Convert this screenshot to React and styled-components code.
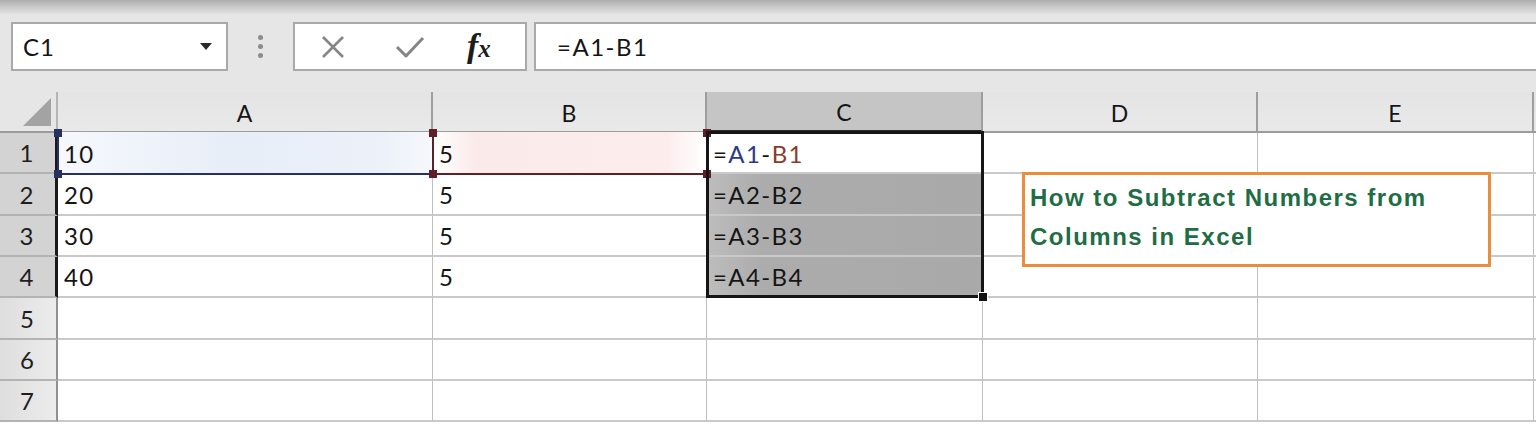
import styled, { createGlobalStyle } from 'styled-components'

const GlobalStyle = createGlobalStyle`
	* { box-sizing: border-box; }
	body {
		margin: 0;
		background: #ffffff;
		font-family: 'Lato', 'Liberation Sans', sans-serif;
	}
`

const columns = ['A', 'B', 'C', 'D', 'E']

const data = [
	['10', '5', null],
	['20', '5', '=A2-B2'],
	['30', '5', '=A3-B3'],
	['40', '5', '=A4-B4'],
	['', '', ''],
	['', '', ''],
	['', '', ''],
]

function App() {
	return (
		<Page>
			<GlobalStyle />
			<TopStrip />
			<FormulaBar>
				<NameBox>
					<NameText>C1</NameText>
					<Caret />
				</NameBox>
				<Grip>
					<Dot />
					<Dot />
					<Dot />
				</Grip>
				<ButtonBox>
					<IconButton>
						<svg width='26' height='26' viewBox='0 0 26 26'>
							<path d='M3 3 L23 23 M23 3 L3 23' stroke='#858585' strokeWidth='2.6' fill='none' />
						</svg>
					</IconButton>
					<IconButton>
						<svg width='30' height='24' viewBox='0 0 30 24'>
							<path d='M2 12 L11 21 L28 3' stroke='#858585' strokeWidth='3' fill='none' strokeLinejoin='round' />
						</svg>
					</IconButton>
					<FxLabel>
						f<span>x</span>
					</FxLabel>
				</ButtonBox>
				<FormulaInput>=A1-B1</FormulaInput>
			</FormulaBar>

			<Sheet>
				<Corner $r={1} $c={1}>
					<svg width='28' height='28' viewBox='0 0 28 28'>
						<path d='M28 0 L28 28 L0 28 Z' fill='#a3a3a3' />
					</svg>
				</Corner>
				{columns.map((col, i) => (
					<ColHeader key={col} $r={1} $c={i + 2} $selected={col === 'C'}>
						{col}
					</ColHeader>
				))}
				<ColHeader $r={1} $c={7} />

				{data.map((row, r) => (
					<Row key={r} index={r} row={row} />
				))}

				<RefBox $r={2} $c={2} $color='#27305e' $fill='linear-gradient(90deg, #f6f8fc 0%, #e8eef8 45%, #ebf0f9 85%, #f6f8fc 100%)'>
					<Handle $x='left' $y='top' $color='#27305e' />
					<Handle $x='left' $y='bottom' $color='#27305e' />
				</RefBox>
				<RefBox $r={2} $c={3} $color='#5e1f26' $fill='linear-gradient(90deg, #ffffff 0%, #fbeaea 15%, #fcecec 85%, #ffffff 100%)'>
					<Handle $x='left' $y='top' $color='#5e1f26' />
					<Handle $x='left' $y='bottom' $color='#5e1f26' />
					<Handle $x='right' $y='top' $color='#5e1f26' />
					<Handle $x='right' $y='bottom' $color='#5e1f26' />
				</RefBox>

				<CellText $r={2} $c={2}>10</CellText>
				<CellText $r={2} $c={3}>5</CellText>
				<CellText $r={2} $c={4}>
					=<RefA>A1</RefA>-<RefB>B1</RefB>
				</CellText>

				<Selection>
					<FillHandle />
				</Selection>

				<Note>
					How to Subtract Numbers from
					<br />
					Columns in Excel
				</Note>
			</Sheet>
		</Page>
	)
}

function Row({ index, row }) {
	const r = index + 2
	const inSelection = index < 4
	return (
		<>
			<RowHeader $r={r} $c={1} $selected={inSelection}>
				{index + 1}
			</RowHeader>
			{[0, 1, 2, 3, 4, 5].map((c) => {
				const shaded = c === 2 && index > 0 && index < 4
				const value = index === 0 ? '' : row[c] || ''
				return (
					<Cell key={c} $r={r} $c={c + 2} $shaded={shaded}>
						{value}
					</Cell>
				)
			})}
		</>
	)
}

export default App

const Page = styled.div`
	width: 1536px;
	height: 440px;
	overflow: hidden;
	background: #ffffff;
	display: flex;
	flex-direction: column;
`
const TopStrip = styled.div`
	height: 14px;
	flex: none;
	background: linear-gradient(180deg, #aeaeae 0%, #c9c9c9 50%, #e2e2e2 100%);
`
const FormulaBar = styled.div`
	height: 78px;
	flex: none;
	background: #e6e6e6;
	display: flex;
	align-items: flex-start;
	padding: 8px 0 0 11px;
`
const NameBox = styled.div`
	width: 217px;
	height: 49px;
	background: #ffffff;
	border: 2px solid #a9a9a9;
	display: flex;
	align-items: center;
	justify-content: space-between;
	padding: 0 14px 0 10px;
`
const NameText = styled.span`
	font-size: 24px;
	color: #151515;
	letter-spacing: 1px;
`
const Caret = styled.span`
	width: 0;
	height: 0;
	border-left: 6px solid transparent;
	border-right: 6px solid transparent;
	border-top: 7px solid #2a2a2a;
`
const Grip = styled.div`
	width: 65px;
	height: 49px;
	display: flex;
	flex-direction: column;
	align-items: center;
	justify-content: center;
	gap: 4px;
`
const Dot = styled.span`
	width: 5px;
	height: 5px;
	border-radius: 50%;
	background: #8c8c8c;
`
const ButtonBox = styled.div`
	width: 234px;
	height: 49px;
	background: #ffffff;
	border: 2px solid #a9a9a9;
	display: grid;
	grid-template-columns: 76px 78px 1fr;
	align-items: center;
`
const IconButton = styled.div`
	display: grid;
	place-items: center;
`
const FxLabel = styled.div`
	font-family: 'Liberation Serif', 'DejaVu Serif', serif;
	font-style: italic;
	font-weight: bold;
	font-size: 34px;
	color: #1c1c1c;
	padding-left: 18px;
	line-height: 1;
	margin-top: -2px;

	span {
		font-size: 25px;
	}
`
const FormulaInput = styled.div`
	flex: 1;
	margin-left: 7px;
	height: 49px;
	background: #ffffff;
	border: 2px solid #a9a9a9;
	border-right: none;
	display: flex;
	align-items: center;
	padding-left: 21px;
	font-size: 24px;
	letter-spacing: 1.5px;
	color: #151515;
`
const Sheet = styled.div`
	position: relative;
	display: grid;
	grid-template-columns: 58px 375px 274px 276px 275px 276px 1fr;
	grid-template-rows: 41px 41px 42px 41px 41px 42px 41px 41px;
	background: #ffffff;
`
const GridItem = styled.div.attrs(({ $r, $c }) => ({
	style: { '--r': $r, '--c': $c },
}))`
	grid-row: var(--r);
	grid-column: var(--c);
`
const Corner = styled(GridItem)`
	background: #e6e6e6;
	border-right: 2px solid #b5b5b5;
	border-bottom: 2px solid #9c9c9c;
	display: flex;
	align-items: flex-end;
	justify-content: flex-end;
	padding: 0 5px 5px 0;
`
const ColHeader = styled(GridItem)`
	background: ${({ $selected }) => ($selected ? '#c5c5c5' : 'linear-gradient(180deg, #e4e4e4 0%, #e9e9e9 100%)')};
	border-right: 2px solid #9e9e9e;
	border-bottom: ${({ $selected }) => ($selected ? '3px solid #2a2a2a' : '2px solid #9c9c9c')};
	display: grid;
	place-items: center;
	font-size: 23px;
	color: #151515;
	padding-top: 2px;
`
const RowHeader = styled(GridItem)`
	background: ${({ $selected }) => ($selected ? '#d3d3d3' : 'linear-gradient(90deg, #dedede 0%, #ececec 100%)')};
	border-right: ${({ $selected }) => ($selected ? '3px solid #1a1a1a' : '2px solid #8f8f8f')};
	border-bottom: 2px solid #b3b3b3;
	display: grid;
	place-items: center;
	font-size: 24px;
	color: #1e1e1e;
	padding-right: 2px;
`
const Cell = styled(GridItem)`
	background: ${({ $shaded }) => ($shaded ? 'linear-gradient(90deg, #bdbdbd 0%, #acacac 20%, #a9a9a9 100%)' : '#ffffff')};
	border-right: 1px solid #bfbfbf;
	border-bottom: 2px solid #c9c9c9;
	display: flex;
	align-items: center;
	padding-left: 6px;
	font-size: 24px;
	letter-spacing: 1.4px;
	color: #151515;
`
const CellText = styled(GridItem)`
	z-index: 2;
	display: flex;
	align-items: center;
	padding-left: 6px;
	font-size: 24px;
	letter-spacing: 1.4px;
	color: #151515;
`
const RefA = styled.span`
	color: #2b3a86;
`
const RefB = styled.span`
	color: #8a3b2c;
`
const RefBox = styled(GridItem)`
	position: relative;
	z-index: 1;
	margin: -1px;
	background: ${({ $fill }) => $fill};
	border: 2px solid ${({ $color }) => $color};
	border-top-color: transparent;
`
const Handle = styled.span`
	position: absolute;
	width: 8px;
	height: 8px;
	background: ${({ $color }) => $color};
	${({ $x }) => ($x === 'left' ? 'left: -5px;' : 'right: -5px;')}
	${({ $y }) => ($y === 'top' ? 'top: -5px;' : 'bottom: -5px;')}
`
const Selection = styled.div`
	grid-row: 2 / 6;
	grid-column: 4;
	position: relative;
	z-index: 3;
	margin: -2px -1px 0 -1px;
	border: 3px solid #151515;
	pointer-events: none;
`
const FillHandle = styled.span`
	position: absolute;
	right: -7px;
	bottom: -7px;
	width: 10px;
	height: 10px;
	background: #111111;
	border: 1px solid #ffffff;
`
const Note = styled.div`
	position: absolute;
	left: 1022px;
	top: 80px;
	width: 469px;
	height: 95px;
	z-index: 4;
	background: #ffffff;
	border: 3px solid #e98f3c;
	padding: 3px 5px;
	font-family: 'Liberation Sans', Arial, sans-serif;
	font-weight: bold;
	font-size: 24px;
	line-height: 39px;
	letter-spacing: 1.5px;
	color: #1f6d45;
`
